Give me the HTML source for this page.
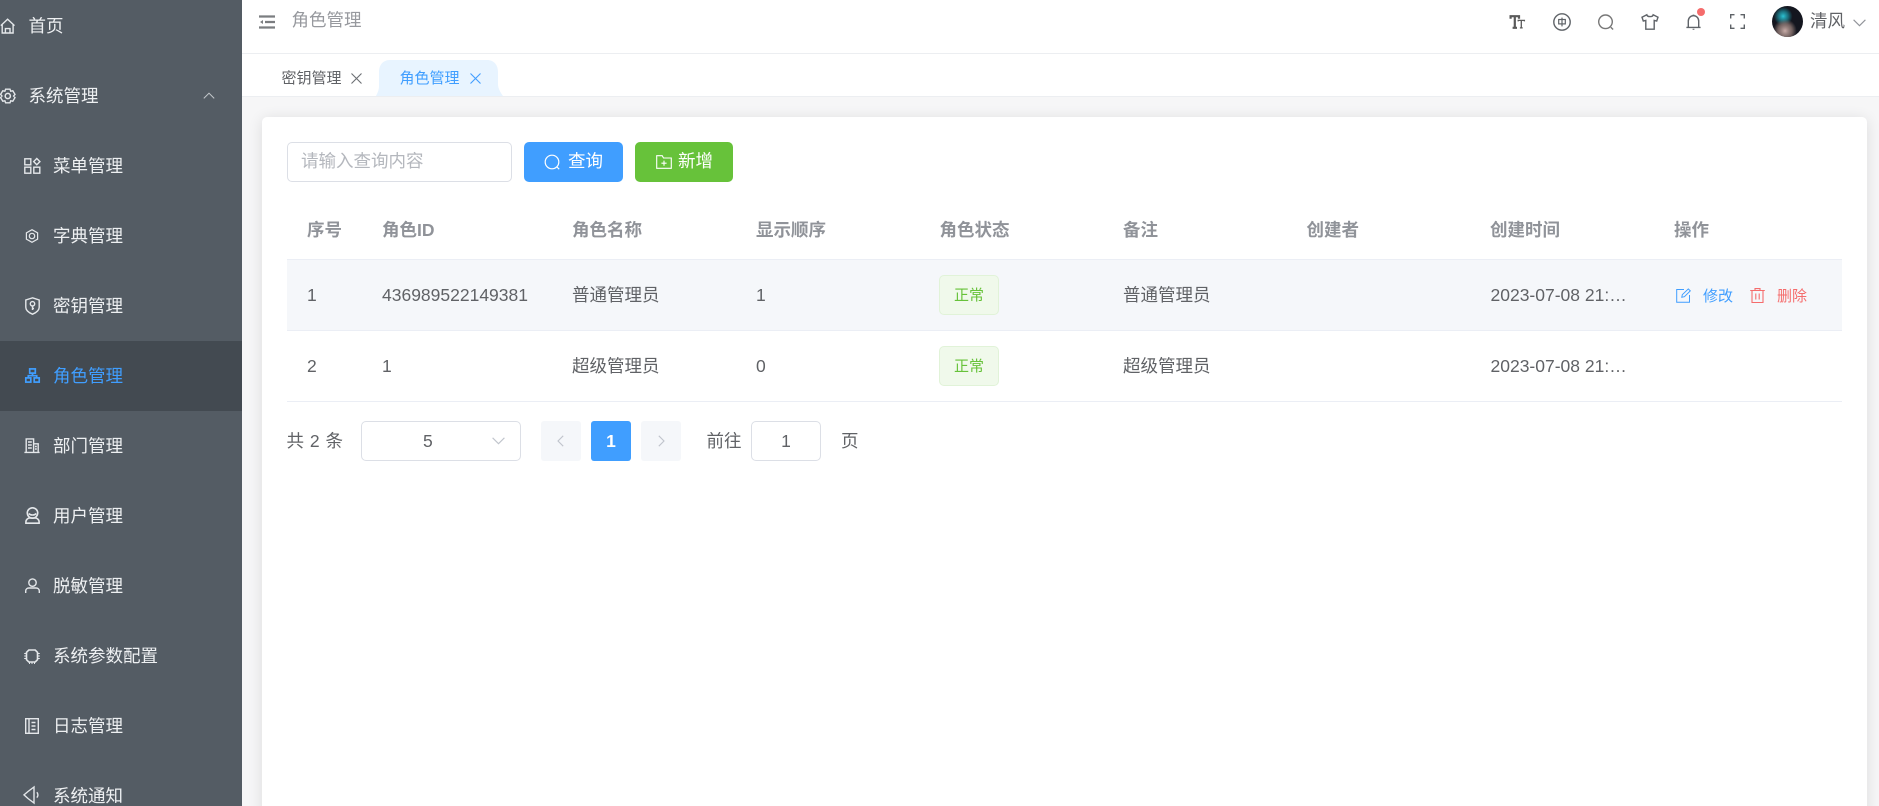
<!DOCTYPE html>
<html lang="zh-CN">
<head>
<meta charset="utf-8">
<title>角色管理</title>
<style>
html,body{margin:0;padding:0;width:1879px;height:806px;overflow:hidden;background:#fff}
body{position:relative;font-family:"Liberation Sans","Noto Sans CJK SC",sans-serif;font-size:17.5px;color:#606266}
.a{position:absolute;white-space:nowrap}
.t{position:absolute;white-space:nowrap;height:30px;line-height:30px}
svg{position:absolute;overflow:visible;fill:none}
#side{position:absolute;left:0;top:0;width:242px;height:806px;background:#545c64;overflow:hidden}
#side .t{color:#eef0f2}
#side svg{stroke:#e4e7ea;stroke-width:1.4}
#act{position:absolute;left:0;top:341px;width:242px;height:70px;background:#434a51}
.th{font-weight:bold;color:#909399}
.ic{stroke:#5f6368;stroke-width:1.4}
</style>
</head>
<body>
<div id="side">
  <div id="act"></div>
  <svg style="left:0;top:18px" width="16" height="16" viewBox="0 0 16 16"><path d="M.8 7.6 7.6 1.2l6.9 6.4M2.2 6.6V15h10.900V6.600M5.400 15v-4.400h4.600V15"/></svg>
  <div class="t" style="left:28.500px;top:11px">首页</div>
  <svg style="left:0;top:88px" width="16" height="16" viewBox="0 0 16 16"><path d="M5.600 1.200h4.400l.7 2 2.100-.4 2.200 3.600-1.400 1.600 1.400 1.600-2.200 3.600-2.100-.4-.7 2H5.600l-.7-2-2.100.4L.6 9.600 2 8 .6 6.400l2.200-3.600 2.100.4z"/><circle cx="7.800" cy="8" r="2.600" stroke-width="1.500"/></svg>
  <div class="t" style="left:28.500px;top:81px">系统管理</div>
  <svg style="left:203px;top:92px" width="12" height="8" viewBox="0 0 12 8"><path d="M.8 6.400 6 1.200l5.200 5.200" stroke="#c4c8cc" stroke-width="1"/></svg>

  <svg style="left:24px;top:158px" width="17" height="16" viewBox="0 0 17 16"><rect x=".8" y=".8" width="6" height="6"/><rect x=".8" y="9.200" width="6" height="6"/><rect x="9.800" y="9.200" width="6" height="6"/><path d="M12.800.5l3.100 3.100-3.100 3.100-3.100-3.100z"/></svg>
  <div class="t" style="left:53px;top:151px">菜单管理</div>

  <svg style="left:25px;top:229px" width="14" height="14" viewBox="0 0 14 14"><path d="M7 .7 12.600 3.800V10.200L7 13.300 1.400 10.200V3.800z" stroke-width="1.200"/><circle cx="7" cy="7" r="2.700" stroke-width="1.200"/></svg>
  <div class="t" style="left:53px;top:221px">字典管理</div>

  <svg style="left:25px;top:297px" width="15" height="18" viewBox="0 0 15 18"><path d="M7.500.8 14.200 3v7.200c0 3-3 5.400-6.700 7-3.700-1.600-6.700-4-6.700-7V3z"/><circle cx="7.500" cy="6.800" r="2.200"/><path d="M7.500 9v4M7.500 11.500h1.500"/></svg>
  <div class="t" style="left:53px;top:291px">密钥管理</div>

  <svg style="left:25px;top:368px;stroke:#409eff;stroke-width:1.700" width="15" height="15" viewBox="0 0 15 15"><rect x="4.700" y=".9" width="5.600" height="4.200"/><rect x=".8" y="9.900" width="5" height="4.200"/><rect x="9.200" y="9.900" width="5" height="4.200"/><path d="M7.500 5.100v2.600H3.300v2.200M7.500 7.700h4.200v2.200"/></svg>
  <div class="t" style="left:53px;top:361px"><span style="color:#409eff">角色管理</span></div>

  <svg style="left:24px;top:438px" width="16" height="15" viewBox="0 0 16 15"><path d="M.4 14.400h15.200M2.200 14.400V.9h7.400v13.500M9.600 5.800h4.600v8.600M4 4h3.800M4 7h3.800M4 10h3.800M11 8.500h1.800M11 11h1.800"/></svg>
  <div class="t" style="left:53px;top:431px">部门管理</div>

  <svg style="left:25px;top:507px;stroke-width:1.600" width="15" height="17" viewBox="0 0 15 17"><circle cx="7.500" cy="6" r="5.200"/><path d="M3.800 6.500c1.600 2 5.800 2 7.400 0M.9 16.200v-1.400c0-2.300 2-3.600 3.800-3.800h5.600c1.800.2 3.800 1.500 3.800 3.800v1.400z"/></svg>
  <div class="t" style="left:53px;top:501px">用户管理</div>

  <svg style="left:25px;top:578px" width="15" height="16" viewBox="0 0 15 16"><circle cx="7.500" cy="4.600" r="3.700"/><path d="M.7 15v-2c0-1.900 1.600-3 3.200-3h7.200c1.600 0 3.200 1.100 3.200 3v2"/></svg>
  <div class="t" style="left:53px;top:571px">脱敏管理</div>

  <svg style="left:24px;top:648px" width="16" height="16" viewBox="0 0 16 16"><path d="M4.800 2h6.400L13.500 4.300v7.400L11.200 14H4.800L2.500 11.700V4.300z" stroke-width="1.600"/><path d="M.2 5.500h2M.2 8h2M.2 10.500h2M13.800 5.500h2M13.800 8h2M13.800 10.500h2M5.500 14v2M8 14v2M10.500 14v2" stroke-width="1"/></svg>
  <div class="t" style="left:53px;top:641px">系统参数配置</div>

  <svg style="left:25px;top:718px" width="14" height="16" viewBox="0 0 14 16"><rect x=".7" y=".7" width="12.600" height="14.600"/><path d="M4 .7v14.600M6.500 4.500h4M6.500 8h4M6.500 11.500h4"/></svg>
  <div class="t" style="left:53px;top:711px">日志管理</div>

  <svg style="left:23px;top:786px;stroke-width:1.400" width="19" height="18" viewBox="0 0 19 18"><path d="M1 8.900 5 5.500 11 1v16l-6-4.500zM13.800 6.300c1.500 1.400 1.500 3.900 0 5.300"/></svg>
  <div class="t" style="left:53px;top:781px">系统通知</div>
</div>

<!-- header -->
<div class="a" style="left:242px;top:53px;width:1637px;height:1px;background:#eceef1"></div>
<svg style="left:259px;top:15px" width="16" height="14" viewBox="0 0 16 14"><path d="M0 1.500h16M6 7h10M0 12.500h16" stroke="#7b7d80" stroke-width="2.200"/><path d="M4 5 1 7l3 2z" fill="#7b7d80"/></svg>
<div class="t" style="left:291.500px;top:5px;color:#97999e">角色管理</div>

<svg style="left:1510px;top:15px" width="15" height="14" viewBox="0 0 15 14"><path d="M.6 3.800V1.200h8.400v2.600M4.800 1.200v11M2.600 12.800h4.400" stroke-width="2.200" stroke="#5a5a5a"/><path d="M8.200 6.400V5.400h6.200v1M11.300 5.400v7.200M9.900 12.900h2.800" stroke-width="1.300" stroke="#5a5a5a"/></svg>
<svg class="ic" style="left:1553px;top:13px" width="18" height="18" viewBox="0 0 18 18"><circle cx="9" cy="9" r="8.200"/><rect x="5.700" y="6.500" width="6.600" height="4.400" stroke-width="1.200"/><path d="M9 4.600v8.800" stroke-width="1.200"/></svg>
<svg class="ic" style="left:1598px;top:14px" width="17" height="17" viewBox="0 0 17 17"><circle cx="7.500" cy="7.800" r="6.800" stroke="#777"/><path d="M12.800 13.200l2.300 2.300" stroke="#777"/></svg>
<svg class="ic" style="left:1641px;top:14px" width="18" height="16" viewBox="0 0 18 16"><path d="M5.800.8 1 3.200 2.300 7l2.500-.6v8.800h8.400V6.400l2.500.6L17 3.200 12.200.8c-.5 2.400-5.900 2.400-6.400 0z"/></svg>
<svg class="ic" style="left:1686px;top:14px" width="15" height="17" viewBox="0 0 15 17"><path d="M2.300 13.400V7c0-3 2.200-5.300 5.200-5.300S12.700 4 12.700 7v6.400M.4 13.400h14.200"/><path d="M7.500.6v1M7.500 14.800v1" stroke-width="1.800"/></svg>
<div class="a" style="left:1697px;top:8px;width:8px;height:8px;border-radius:50%;background:#f56c6c"></div>
<svg class="ic" style="left:1730px;top:14px" width="15" height="15" viewBox="0 0 15 15"><path d="M.7 4.500V.7h3.800M10.500.7h3.800v3.800M14.300 10.500v3.800h-3.800M4.500 14.300H.7v-3.800"/></svg>
<svg style="left:1772px;top:6px" width="31" height="31" viewBox="0 0 31 31">
  <defs>
    <radialGradient id="g1" cx=".36" cy=".33" r=".3"><stop offset="0" stop-color="#2cc4d4"/><stop offset=".5" stop-color="#1e8a9a" stop-opacity=".8"/><stop offset="1" stop-color="#1e8a9a" stop-opacity="0"/></radialGradient>
    <radialGradient id="g2" cx=".42" cy=".8" r=".38"><stop offset="0" stop-color="#c8aca8"/><stop offset=".6" stop-color="#8a7470" stop-opacity=".8"/><stop offset="1" stop-color="#8a7470" stop-opacity="0"/></radialGradient>
    <clipPath id="c"><circle cx="15.500" cy="15.500" r="15.500"/></clipPath>
  </defs>
  <g clip-path="url(#c)"><rect width="31" height="31" fill="#14161f"/><rect width="31" height="31" fill="url(#g1)"/><rect width="31" height="31" fill="url(#g2)"/></g>
</svg>
<div class="t" style="left:1810px;top:6px;color:#606266">清风</div>
<svg style="left:1853px;top:19px" width="13" height="8" viewBox="0 0 13 8"><path d="M.6.8 6.500 6.700 12.400.8" stroke="#909399" stroke-width="1.100"/></svg>

<!-- tabs -->
<div class="t" style="left:281.500px;top:64px;font-size:15px;color:#606266">密钥管理</div>
<svg style="left:351px;top:73px" width="11" height="11" viewBox="0 0 11 11"><path d="M.5.500l10 10M10.500.500l-10 10" stroke="#6b6e73" stroke-width="1.100"/></svg>
<svg style="left:376px;top:60px" width="127" height="36" viewBox="0 0 127 36"><path d="M0 36C1.500 33 3 30 3 26V12C3 5 7 0 14 0H111C118 0 122 5 122 12V24C122 29 125 33 127 36Z" fill="#e8f4ff"/></svg>
<div class="t" style="left:399.500px;top:64px;font-size:15px;color:#409eff">角色管理</div>
<svg style="left:470px;top:73px" width="11" height="11" viewBox="0 0 11 11"><path d="M.5.500l10 10M10.500.500l-10 10" stroke="#409eff" stroke-width="1.100"/></svg>

<!-- main -->
<div class="a" style="left:242px;top:96px;width:1637px;height:710px;background:#f6f6f7;border-top:1px solid #eceef1;box-sizing:border-box"></div>
<div class="a" style="left:262px;top:117px;width:1605px;height:700px;background:#fff;border-radius:5px;box-shadow:0 2px 15px rgba(0,0,0,.11)"></div>

<div class="a" style="left:287px;top:142px;width:225px;height:40px;box-sizing:border-box;border:1px solid #dcdfe6;border-radius:5px;background:#fff"></div>
<div class="t" style="left:301px;top:146px;color:#b4b7bd">请输入查询内容</div>
<div class="a" style="left:524px;top:142px;width:99px;height:40px;background:#409eff;border-radius:5px"></div>
<svg style="left:544px;top:154px" width="17" height="17" viewBox="0 0 17 17"><circle cx="8" cy="8" r="6.800" stroke="#fff" stroke-width="1.200"/><path d="M13 13l2.200 2.200" stroke="#fff" stroke-width="1.200"/></svg>
<div class="t" style="left:568px;top:146px;color:#fff">查询</div>
<div class="a" style="left:635px;top:142px;width:98px;height:40px;background:#67c23a;border-radius:5px"></div>
<svg style="left:656px;top:155px" width="16" height="14" viewBox="0 0 16 14"><path d="M.7.700h5.500L7.500 3h7.800v10.300H.7zM8 5.600v5.200M5.400 8.200h5.200" stroke="#fff" stroke-width="1.100"/></svg>
<div class="t" style="left:678px;top:146px;color:#fff">新增</div>

<!-- table -->
<div class="t th" style="left:307px;top:215px">序号</div>
<div class="t th" style="left:382px;top:215px">角色ID</div>
<div class="t th" style="left:572px;top:215px">角色名称</div>
<div class="t th" style="left:756px;top:215px">显示顺序</div>
<div class="t th" style="left:939.500px;top:215px">角色状态</div>
<div class="t th" style="left:1123px;top:215px">备注</div>
<div class="t th" style="left:1306.500px;top:215px">创建者</div>
<div class="t th" style="left:1490px;top:215px">创建时间</div>
<div class="t th" style="left:1674px;top:215px">操作</div>

<div class="a" style="left:287px;top:259px;width:1555px;height:1px;background:#ebeef5"></div>
<div class="a" style="left:287px;top:260px;width:1555px;height:70px;background:#f5f7fa"></div>
<div class="a" style="left:287px;top:330px;width:1555px;height:1px;background:#ebeef5"></div>
<div class="a" style="left:287px;top:401px;width:1555px;height:1px;background:#ebeef5"></div>

<div class="t" style="left:307px;top:280px">1</div>
<div class="t" style="left:382px;top:280px">436989522149381</div>
<div class="t" style="left:572px;top:280px">普通管理员</div>
<div class="t" style="left:756px;top:280px">1</div>
<div class="a" style="left:939px;top:275px;width:60px;height:40px;box-sizing:border-box;border:1px solid #e1f3d8;border-radius:5px;background:#f0f9eb;color:#67c23a;font-size:15px;line-height:40px;text-align:center">正常</div>
<div class="t" style="left:1123px;top:280px">普通管理员</div>
<div class="t" style="left:1490.500px;top:280px">2023-07-08 21:…</div>
<svg style="left:1676px;top:288px" width="15" height="15" viewBox="0 0 15 15"><path d="M8 1.500H.7v12.800h12.800V7M5.800 9.200l.5-2.500L12.300.9l2 2-5.900 5.800z" stroke="#409eff" stroke-width="1"/></svg>
<div class="t" style="left:1703px;top:281.500px;font-size:15px;color:#409eff">修改</div>
<svg style="left:1750px;top:288px" width="15" height="15" viewBox="0 0 15 15"><path d="M.2 2.500h14.600M2 2.500v12h11v-12M5 2.500V.6h5v1.900M5.800 5.500v6M9.200 5.500v6" stroke="#f56c6c" stroke-width="1.100"/></svg>
<div class="t" style="left:1777px;top:281.500px;font-size:15px;color:#f56c6c">删除</div>

<div class="t" style="left:307px;top:351px">2</div>
<div class="t" style="left:382px;top:351px">1</div>
<div class="t" style="left:572px;top:351px">超级管理员</div>
<div class="t" style="left:756px;top:351px">0</div>
<div class="a" style="left:939px;top:346px;width:60px;height:40px;box-sizing:border-box;border:1px solid #e1f3d8;border-radius:5px;background:#f0f9eb;color:#67c23a;font-size:15px;line-height:40px;text-align:center">正常</div>
<div class="t" style="left:1123px;top:351px">超级管理员</div>
<div class="t" style="left:1490.500px;top:351px">2023-07-08 21:…</div>

<!-- pagination -->
<div class="t" style="left:286.500px;top:426px;word-spacing:1px">共 2 条</div>
<div class="a" style="left:361px;top:421px;width:160px;height:40px;box-sizing:border-box;border:1px solid #dcdfe6;border-radius:5px;background:#fff"></div>
<div class="t" style="left:423px;top:426px">5</div>
<svg style="left:492px;top:437px" width="13" height="8" viewBox="0 0 13 8"><path d="M.6.800 6.500 6.700 12.400.800" stroke="#c0c4cc" stroke-width="1.100"/></svg>
<div class="a" style="left:541px;top:421px;width:40px;height:40px;background:#f5f7fa;border-radius:3px"></div>
<svg style="left:557px;top:435px" width="7" height="12" viewBox="0 0 7 12"><path d="M6.200.8 1 6l5.200 5.200" stroke="#c0c4cc" stroke-width="1.100"/></svg>
<div class="a" style="left:591px;top:421px;width:40px;height:40px;background:#409eff;border-radius:3px;color:#fff;font-weight:bold;text-align:center;line-height:40px">1</div>
<div class="a" style="left:641px;top:421px;width:40px;height:40px;background:#f5f7fa;border-radius:3px"></div>
<svg style="left:658px;top:435px" width="7" height="12" viewBox="0 0 7 12"><path d="M.8.800 6 6 .8 11.200" stroke="#c0c4cc" stroke-width="1.100"/></svg>
<div class="t" style="left:706.500px;top:426px">前往</div>
<div class="a" style="left:751px;top:421px;width:70px;height:40px;box-sizing:border-box;border:1px solid #dcdfe6;border-radius:5px;background:#fff;text-align:center;line-height:38px">1</div>
<div class="t" style="left:841px;top:426px">页</div>
</body>
</html>
